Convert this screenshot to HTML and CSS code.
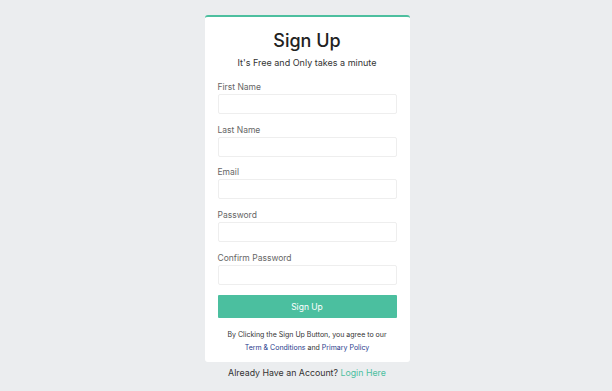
FILE: index.html
```html
<!DOCTYPE html>
<html lang="en">
<head>
<meta charset="utf-8">
<title>Sign Up</title>
<link rel="stylesheet" href="styles.css">
</head>
<body>
<div class="page">
  <div class="card">
    <h1 class="title">Sign Up</h1>
    <p class="subtitle">It's Free and Only takes a minute</p>
    <form class="form">
      <div class="field">
        <label class="label">First Name</label>
        <input class="input" type="text">
      </div>
      <div class="field">
        <label class="label">Last Name</label>
        <input class="input" type="text">
      </div>
      <div class="field">
        <label class="label">Email</label>
        <input class="input" type="email">
      </div>
      <div class="field">
        <label class="label">Password</label>
        <input class="input" type="password">
      </div>
      <div class="field">
        <label class="label">Confirm Password</label>
        <input class="input" type="password">
      </div>
      <button class="button" type="button">Sign Up</button>
    </form>
    <p class="terms">By Clicking the Sign Up Button, you agree to our<br><a class="link" href="#">Term &amp; Conditions</a> and <a class="link" href="#">Primary Policy</a></p>
  </div>
  <p class="login">Already Have an Account? <a class="login-link" href="#">Login Here</a></p>
</div>
</body>
</html>
```
FILE: styles.css
```css
* { box-sizing: border-box; }
html, body { margin: 0; padding: 0; }
body {
  background: #ebedef;
  font-family: "Inter", "Noto Sans", sans-serif;
  color: #333;
  padding-left: 2px;
}
.page {
  width: 205px;
  margin: 15px auto 0;
}
.card {
  background: #fff;
  border-top: 2px solid #4dbf9f;
  border-radius: 3px;
  padding: 12px 13px 8px;
}
.title {
  margin: 0;
  font-size: 18px;
  line-height: 24px;
  font-weight: 500;
  text-align: center;
  color: #222;
}
.subtitle {
  margin: 4px 0 0;
  font-size: 9px;
  line-height: 12px;
  text-align: center;
  color: #333;
}
.form {
  margin-top: 12px;
  display: flex;
  flex-direction: column;
}
.field {
  display: flex;
  flex-direction: column;
  margin-bottom: 9.7px;
}
.label {
  font-size: 8.5px;
  line-height: 12px;
  color: #666;
  margin-bottom: 1px;
}
.input {
  height: 20px;
  width: 100%;
  border: 1px solid #eeeeee;
  border-radius: 2px;
  background: #fff;
  margin: 0;
  padding: 0 6px;
}
.button {
  margin-top: 1px;
  height: 23px;
  width: 100%;
  border: none;
  border-radius: 1px;
  background: #4bbf9f;
  color: #fff;
  font-family: inherit;
  font-size: 8.5px;
  padding: 0;
}
.terms {
  margin: 10px 0 0;
  font-size: 7px;
  line-height: 13px;
  text-align: center;
  color: #333;
}
.link {
  color: #273a8c;
  text-decoration: none;
}
.login {
  margin: 5px 0 0;
  font-size: 8.8px;
  line-height: 12px;
  text-align: center;
  color: #333;
}
.login-link {
  color: #4bbf9f;
  text-decoration: none;
}
```
